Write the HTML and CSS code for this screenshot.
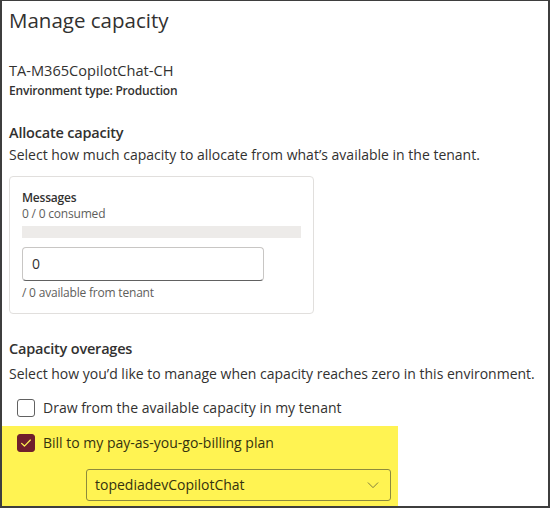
FILE: index.html
```html
<!DOCTYPE html>
<html lang="en">
<head>
<meta charset="utf-8">
<title>Manage capacity</title>
<link rel="stylesheet" href="styles.css">
</head>
<body>
<div class="frame">
  <h1 class="title">Manage capacity</h1>

  <div class="env">
    <div class="env-name">TA-M365CopilotChat-CH</div>
    <div class="env-type">Environment type: Production</div>
  </div>

  <section class="section">
    <h2 class="section-title">Allocate capacity</h2>
    <p class="section-desc">Select how much capacity to allocate from what’s available in the tenant.</p>
    <div class="card">
      <div class="card-title">Messages</div>
      <div class="card-sub">0 / 0 consumed</div>
      <div class="bar"></div>
      <div class="input">0</div>
      <div class="card-sub avail">/ 0 available from tenant</div>
    </div>
  </section>

  <section class="section overages">
    <h2 class="section-title">Capacity overages</h2>
    <p class="section-desc">Select how you’d like to manage when capacity reaches zero in this environment.</p>
    <div class="option first">
      <span class="box"></span>
      <span class="label">Draw from the available capacity in my tenant</span>
    </div>
    <div class="highlight">
      <div class="option">
        <span class="box checked">
          <svg viewBox="0 0 16 16" width="14" height="14"><path d="M3 8.4l3.2 3.1L13 4.6" fill="none" stroke="#fff352" stroke-width="1.4" stroke-linecap="round" stroke-linejoin="round"/></svg>
        </span>
        <span class="label">Bill to my pay-as-you-go-billing plan</span>
      </div>
      <div class="dropdown">
        <span class="dropdown-text">topediadevCopilotChat</span>
        <svg class="chevron" viewBox="0 0 16 16" width="14" height="14"><path d="M2.5 5.5L8 11l5.5-5.5" fill="none" stroke="#6d6b3c" stroke-width="1" stroke-linecap="round" stroke-linejoin="round"/></svg>
      </div>
    </div>
  </section>
</div>
</body>
</html>
```

FILE: styles.css
```css
* { box-sizing: border-box; }
html, body { margin: 0; padding: 0; background: #fff; }
body {
  font-family: "Open Sans", "Noto Sans", sans-serif;
  color: #323130;
}
.frame {
  width: 550px;
  height: 508px;
  border: 2px solid #3e3e3e;
  border-top-width: 1px;
  padding: 0 0 0 7px;
  overflow: hidden;
}
.title {
  margin: 0;
  padding-top: 5px;
  font-size: 20.5px;
  font-weight: 500;
  line-height: 28px;
}
.env { margin-top: 26px; }
.env-name { font-size: 14.6px; line-height: 20px; }
.env-type { font-size: 12px; font-weight: 600; line-height: 16px; margin-top: 3px; letter-spacing: -0.2px; }
.section { margin-top: 24px; }
.section-title { margin: 0; font-size: 14.5px; font-weight: 600; line-height: 20px; letter-spacing: -0.2px; }
.section-desc { margin: 2px 0 0; font-size: 14px; line-height: 20px; }
.card {
  margin-top: 11px;
  width: 305px;
  height: 138px;
  border: 1px solid #e1dfdd;
  border-radius: 4px;
  padding: 13px 12px 0 12px;
}
.card-title { font-size: 12px; font-weight: 600; line-height: 16px; letter-spacing: -0.2px; }
.card-sub { font-size: 12px; line-height: 16px; color: #605e5c; letter-spacing: -0.2px; }
.bar {
  margin-top: 4px;
  width: 279px;
  height: 12px;
  background: #edebe9;
}
.input {
  margin-top: 9px;
  width: 242px;
  height: 34px;
  border: 1px solid #c8c6c4;
  border-bottom-color: #616161;
  border-radius: 4px;
  padding: 0 9px;
  font-size: 14px;
  line-height: 32px;
}
.avail { margin-top: 4px; }
.overages { margin-top: 25px; }
.overages .section-desc { margin-top: 5px; }
.option {
  display: flex;
  align-items: center;
  gap: 8px;
  padding-left: 8px;
  height: 20px;
}
.option.first { margin-top: 14px; }
.box {
  width: 18px;
  height: 18px;
  border: 1px solid #616161;
  border-radius: 3px;
  display: flex;
  align-items: center;
  justify-content: center;
  flex: none;
}
.box.checked { background: #701f2c; border-color: #701f2c; }
.label { font-size: 14px; line-height: 20px; }
.highlight {
  margin: 8px 0 0 -7px;
  width: 396px;
  height: 82px;
  background: #fff352;
  padding-top: 7px;
  padding-left: 7px;
}
.highlight .option { color: #34320f; }
.dropdown {
  margin: 16px 0 0 77px;
  width: 305px;
  height: 32px;
  border: 1px solid #8d8a3c;
  border-radius: 3px;
  display: flex;
  align-items: center;
  justify-content: space-between;
  padding: 0 10px 0 8px;
  color: #34320f;
}
.dropdown-text { font-size: 14px; line-height: 20px; }
.chevron { flex: none; }
```
